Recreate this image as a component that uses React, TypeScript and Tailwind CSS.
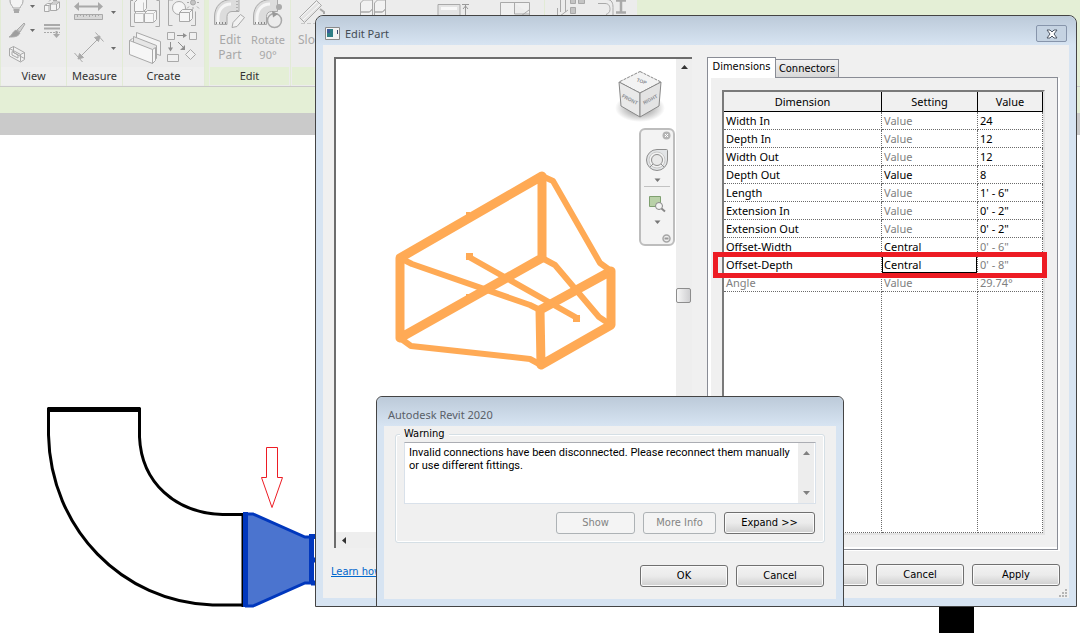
import type { ReactNode } from "react";

const UI_FONT = "font-['Noto_Sans','Open_Sans',sans-serif]";
const DIALOG_FONT = "font-['DejaVu_Sans_Condensed','DejaVu_Sans',sans-serif]";

const ROWS = [
  { name: "Width In", setting: "Value", value: "24" },
  { name: "Depth In", setting: "Value", value: "12" },
  { name: "Width Out", setting: "Value", value: "12" },
  { name: "Depth Out", setting: "Value", value: "8", editable: true },
  { name: "Length", setting: "Value", value: "1' - 6\"" },
  { name: "Extension In", setting: "Value", value: "0' - 2\"" },
  { name: "Extension Out", setting: "Value", value: "0' - 2\"" },
  { name: "Offset-Width", setting: "Central", value: "0' - 6\"", editable: true, computed: true },
  { name: "Offset-Depth", setting: "Central", value: "0' - 8\"", editable: true, computed: true, active: true },
  { name: "Angle", setting: "Value", value: "29.74°", computed: true, disabled: true },
];

const CELL = "h-[18px] border-b border-dotted border-[#6a6a6a] p-0 pl-0.5 text-left align-middle leading-4";

// Ribbon glyphs share one coordinate space; each svg shows its own slice of it.
function Glyph({ x, y = 0, w, h, children }: { x: number; y?: number; w: number; h: number; children: ReactNode }) {
  return (
    <svg
      width={w}
      height={h}
      viewBox={`${x} ${y} ${w} ${h}`}
      fill="none"
      stroke="#a9a9a9"
      className="block"
      aria-hidden="true"
    >
      {children}
    </svg>
  );
}

function Caret({ x, y }: { x: number; y: number }) {
  return <path d={`M${x - 3} ${y - 1}h5l-2.5 3z`} fill="#6b6b6b" stroke="none" />;
}

function RibbonPanel({ label, green, className = "", children }: { label: string; green?: boolean; className?: string; children: ReactNode }) {
  return (
    <section className={`flex h-[86px] shrink-0 flex-col border-r border-[#e2ebd6] ${className}`}>
      <div className="h-[67px] overflow-hidden">{children}</div>
      <h2
        className={`h-[18px] text-center text-[11px] leading-[18px] font-normal text-[#333] ${green ? "mx-px bg-[#e4efd6]" : "bg-[#efefef]"}`}
      >
        {label}
      </h2>
    </section>
  );
}

function Ribbon() {
  return (
    <header>
      <div className="flex h-[87px] overflow-hidden border-b border-[#c9c9c9] bg-[#e4efd6]">
        <div className="flex shrink-0 bg-[#ececec]">
          <RibbonPanel label="View" className="w-[67px] border-l border-l-[#e2ebd6]">
            <div className="flex pl-[7px]">
              <div>
                <button type="button" aria-label="Hide in view" className="block">
                  <Glyph x={8} w={34} h={22}>
                    <path d="M13 8c0-2-3-3-3-7 0-3 3-5 6.500-5s6.500 2 6.500 5c0 4-3 5-3 7z" fill="#f4f4f4" />
                    <path d="M13.500 10h6M14 12h5" strokeWidth="2" />
                    <Caret x={33} y={6} />
                  </Glyph>
                </button>
                <button type="button" aria-label="Override graphics" className="block">
                  <Glyph x={8} y={22} w={34} h={22}>
                    <path d="M24 23l1 1-5 8-3-2z" fill="#d0d0d0" />
                    <path d="M16 30l4 3c-2 4-6 4-11 4 3-1 3-5 7-7z" fill="#9e9e9e" />
                    <Caret x={33} y={30} />
                  </Glyph>
                </button>
                <button type="button" aria-label="Selection box" className="block">
                  <Glyph x={8} y={44} w={34} h={22}>
                    <path d="M9.500 48.500l4-2 11 6v7l-4 2.500-11-6zM9.500 48.500l11 6 4-2M20.500 54.500v7" fill="#f2f2f2" />
                    <path d="M12 51.500l6 3.500v3l-6-3zM13.500 46.500v6l11 6" />
                  </Glyph>
                </button>
              </div>
              <div>
                <button type="button" aria-label="Displace elements" className="block">
                  <Glyph x={42} w={22} h={22}>
                    <path d="M44.500 5.500l3-2h4v5.500l-2.500 2.500h-4.500zM44.500 5.500h4.500v6M49 5.500l2.500-2" fill="#f4f4f4" />
                    <path d="M50.500 4l3-2h6v6l-3 2.500h-6zM50.500 4h6v6.500M56.500 4l3-2M49 1.500l2-2M53 .5h4" fill="#f4f4f4" />
                  </Glyph>
                </button>
                <button type="button" aria-label="Linework" className="block">
                  <Glyph x={42} y={22} w={22} h={22}>
                    <path d="M44 25h16M44 28.500h16" strokeWidth="2" />
                    <path d="M44 32.500h16" strokeDasharray="2 1" />
                    <path d="M56.500 31v4" strokeWidth="2" />
                    <path d="M53 34h7l-3.500 4z" fill="#a9a9a9" stroke="none" />
                  </Glyph>
                </button>
              </div>
            </div>
          </RibbonPanel>

          <RibbonPanel label="Measure" className="w-14">
            <button type="button" aria-label="Measure between references" className="ml-1 block">
              <Glyph x={71} w={48} h={24}>
                <path d="M76 6.500h24" strokeWidth="2" />
                <path d="M79 2l-5 4.500 5 4.500zM98 2l5 4.500-5 4.500z" fill="#a9a9a9" stroke="none" />
                <path d="M74.500 14.500h28v5h-28z" fill="#d8d8d8" />
                <path d="M77.500 14v3M80.500 14v2M83.500 14v3M86.500 14v2M89.500 14v3M92.500 14v2M95.500 14v3M98.500 14v2" />
                <Caret x={114} y={12} />
              </Glyph>
            </button>
            <button type="button" aria-label="Aligned dimension" className="ml-1 block">
              <Glyph x={71} y={24} w={48} h={42}>
                <path d="M79 58l20-20M74.500 53l8 9M95.500 32.500l8 9" />
                <path d="M78 59l1.500-5.500 4 4zM100 36l-5.500 1.500 4 4z" fill="#a9a9a9" />
                <Caret x={114} y={48} />
              </Glyph>
            </button>
          </RibbonPanel>

          <RibbonPanel label="Create" className="w-[82px]">
            <div className="grid grid-cols-[40px_38px] pl-[3px]">
              <button type="button" aria-label="Create group">
                <Glyph x={126} w={40} h={28}>
                  <path d="M133 .5h-2.500v26h4M156.500 .5h3v26h-4" />
                  <path d="M134.500 2.500l3-3h9v9l-3 3h-9z" fill="#f6f6f6" />
                  <path d="M134.500 13.500l2-2h9v9l-2 2h-9z" fill="#f6f6f6" />
                  <path d="M144.500 13.500l3-3h9v9l-3 3h-9z" fill="#f6f6f6" />
                  <path d="M143.500 2.500v9M134.500 13.500h9v9M153.500 22.500v-9h-9M153.500 13.500l3-3" stroke="#c4c4c4" />
                </Glyph>
              </button>
              <button type="button" aria-label="Create similar">
                <Glyph x={166} w={38} h={28}>
                  <path d="M173 0h-4.500v25.500h4M191 25.500h4.500v-14" />
                  <circle cx="179" cy="8" r="6.500" fill="#f6f6f6" />
                  <path d="M179.500 12.500l3-3h10v9l-3 3h-10zM179.500 12.500h10v9M189.500 12.500l3-3" fill="#f6f6f6" />
                  <circle cx="193" cy="2.500" r="2.500" fill="#c4c4c4" />
                  <path d="M187 2.500h2M197 2.500h2M189 6.500l-2 2M197 6.500l2 2M193 7v2" />
                </Glyph>
              </button>
              <button type="button" aria-label="Create parts">
                <Glyph x={126} y={28} w={40} h={38}>
                  <path d="M136.500 32.500l24 9v14l-24-9z" fill="#f4f4f4" />
                  <path d="M133.500 36.500l23 9v13l-23-9z" fill="#e6e6e6" />
                  <path d="M129.500 40.500l23 9v14l-23-9zM152.500 49.500l3-2v13l-3 3M129.500 40.500l3-2" fill="#f6f6f6" />
                </Glyph>
              </button>
              <button type="button" aria-label="Create assembly">
                <Glyph x={166} y={28} w={38} h={38}>
                  <path d="M167.500 32.500h7v7h-7zM189.500 32.500h7v7h-7zM167.500 54.500h11v7h-11zM190.500 49.500l5 5-5 5-5-5z" fill="#f0f0f0" />
                  <path d="M177 35.500h7M170.500 42v6M178 42l5 5" stroke="#8f8f8f" />
                  <path d="M183 33l4 2.500-4 2.500zM168 47.500h5l-2.500 4zM180 50h5v-5z" fill="#8f8f8f" stroke="none" />
                </Glyph>
              </button>
            </div>
          </RibbonPanel>

          <div className="w-1 bg-[#e4efd6]" />

          <RibbonPanel label="Edit" green className="w-[82px]">
            <div className="flex items-start pl-0.5 text-[12px] leading-[15px] text-[#a8a8a8]">
              <button type="button" className="w-[38px]">
                <Glyph x={211} w={38} h={32}>
                  <path d="M214.500 24.500V17c0-11 7-17.500 17-17.500h7.500v12h-7c-3 0-5 2-5 5v8z" fill="#dcdcdc" />
                  <path d="M218 24.500V18c0-8 5-14 13-14" stroke="#f6f6f6" strokeWidth="3" />
                  <path d="M216.500 22v2M219.500 22v2M222.500 22v2M225.500 22v2M237 1v1M237 4v1M237 7v1M237 10v1" stroke="#888" />
                  <path d="M240.500 14.500l4 3-7.500 9-5 1 1-5z" fill="#f2f2f2" />
                </Glyph>
                <span className="block">Edit<br />Part</span>
              </button>
              <button type="button" className="w-[38px] text-center whitespace-nowrap">
                <Glyph x={249} w={38} h={32}>
                  <path d="M253.500 24.500V17c0-11 7-17.500 17-17.500h7v12h-6c-3 0-5 2-5 5v8z" fill="#dcdcdc" />
                  <path d="M257 24.500V18c0-8 5-14 13-14" stroke="#f6f6f6" strokeWidth="3" />
                  <path d="M255.500 22v2M258.500 22v2M261.500 22v2M264.500 22v2" stroke="#888" />
                  <circle cx="279" cy="7" r="3" fill="#aaa" stroke="none" />
                  <circle cx="274.500" cy="20.500" r="7" fill="#ececec" strokeWidth="1.500" />
                  <path d="M272 11l6 3-5 3.500z" fill="#999" stroke="none" />
                </Glyph>
                <span className="block text-[11px] leading-[15px]">Rotate<br />90°</span>
              </button>
            </div>
          </RibbonPanel>

          <RibbonPanel label="" green className="w-[254px]">
            <div className="flex items-start text-[12px] leading-[15px] text-[#a8a8a8]">
              <button type="button" className="w-[55px] text-left">
                <Glyph x={290} w={55} h={32}>
                  <path d="M298.500 17.500L315.500 .5l5 5-17 17z" fill="#e4e4e4" />
                  <path d="M300 17L316 2M302 20L319 4" stroke="#fafafa" />
                  <path d="M300 23.500h18" strokeDasharray="4 2" stroke="#c8c8c8" />
                  <path d="M319 9l4 3v2" strokeWidth="2" />
                </Glyph>
                <span className="block pl-[7px]">Slope</span>
              </button>
              <button type="button" aria-label="Justify">
                <Glyph x={345} w={65} h={32}>
                  <path d="M359.500 3l3-3h9v9l-3 3h-9zM373.500 3l3-3h8v9l-3 3h-8zM359.500 12h9l3-3v8h-12zM373.500 12h8l3-3v8h-11z" fill="#f2f2f2" />
                </Glyph>
              </button>
              <button type="button" aria-label="Elevation">
                <Glyph x={410} w={75} h={32}>
                  <path d="M437 4.500h22v12h-22z" fill="#e4e4e4" />
                  <path d="M440 8.500h16" stroke="#f8f8f8" strokeWidth="3" />
                  <path d="M464.500 5v12M461 4.500h7M462 9l2.500-3 2.500 3" stroke="#999" />
                </Glyph>
              </button>
              <button type="button" aria-label="Cap open ends">
                <Glyph x={485} w={58} h={32}>
                  <path d="M499.500 2.500h29v14h-29zM513.500 3v11h15M528 10l-8 6" fill="#f0f0f0" />
                </Glyph>
              </button>
            </div>
          </RibbonPanel>
          <RibbonPanel label="" green className="w-[92px] border-r-0">
            <div className="flex items-start">
              <button type="button" aria-label="Insulation">
                <Glyph x={544} w={47} h={32}>
                  <path d="M559.500 0v12M564.500 0v12M556.500 8v8M567 10l-8 6" />
                  <path d="M569.500-1.500h5v5h-5zM577.500-1.500h6v5h-6zM569.500 7.500h5v6h-5z" fill="#c4c4c4" />
                </Glyph>
              </button>
              <button type="button" aria-label="Lining">
                <Glyph x={591} w={44} h={32}>
                  <path d="M597 3.500h7c4 0 5 3 5 6s-2 4-4 5M597-.5h9c5 0 6 4 6 8v8" />
                  <path d="M615 .5h10M620 0v12M615 12.500h10" strokeWidth="2.500" />
                </Glyph>
              </button>
            </div>
          </RibbonPanel>
        </div>
      </div>
      <div className="h-[26px] bg-[#e4efd6]" />
      <div className="h-[22px] bg-[#cacaca]" />
    </header>
  );
}

function DuctPlan() {
  return (
    <svg
      viewBox="0 135 1080 498"
      preserveAspectRatio="xMinYMin slice"
      className="block h-[498px] w-full"
      role="img"
      aria-label="Duct elbow and selected transition"
    >
      <g fill="none" stroke="#000" strokeWidth="3">
        <path d="M48.500 408v27c2 94 74 167 164 170h31" />
        <path d="M139.500 408v29c2 46 36 76 83 77.500h21" />
        <path d="M47.500 409.500h93" strokeWidth="5" />
        <path d="M242.500 513v94" strokeWidth="2" />
      </g>
      <path d="M248 514h6l52 23h6v46h-6l-52 23h-6z" fill="#4b74cf" />
      <g fill="none" stroke="#0037bd" strokeWidth="3">
        <path d="M245.500 512v95" strokeWidth="5" />
        <path d="M245 514h8l52 23h8M245 606h8l52-23h8" />
        <path d="M311.500 534v50" strokeWidth="5" />
        <path d="M311 536.500h8M311 560h8M311 583h8" strokeWidth="5" />
      </g>
      <path d="M266.500 447.500h11v30h5l-10.500 30-10.500-30h5z" fill="#fff" stroke="#ed1c24" />
      <path d="M939 600h35v33h-35z" />
    </svg>
  );
}

function ViewCube() {
  return (
    <svg width="52" height="60" viewBox="614 66 52 60" className="absolute top-[7px] right-[10px]" role="img" aria-label="View cube">
      <defs>
        <radialGradient id="cubeShadow">
          <stop offset="0.500" stopColor="#bdbdbd" />
          <stop offset="1" stopColor="#fff" />
        </radialGradient>
      </defs>
      <ellipse cx="640" cy="108" rx="25" ry="14" fill="url(#cubeShadow)" />
      <g stroke="#888" strokeWidth="1" strokeLinejoin="round">
        <path d="M640 71.500l21 10.500-21 11-21-11z" fill="#f3f3f3" strokeDasharray="3 1" />
        <path d="M619 82l21 11v24l-19-11z" fill="#e9e9e9" />
        <path d="M661 82l-21 11v24l19-11z" fill="#e3e3e3" />
      </g>
      <g fontFamily="Liberation Sans, sans-serif" fontSize="5" fontWeight="700" fill="#8d9096" textAnchor="middle">
        <text transform="translate(641 83) rotate(20)">TOP</text>
        <text transform="translate(629 101) rotate(28)">FRONT</text>
        <text transform="translate(651 101) rotate(-28)">RIGHT</text>
      </g>
    </svg>
  );
}

function NavBar() {
  return (
    <div className="absolute top-[69px] right-px flex w-9 flex-col items-center rounded-md border-2 border-[#bdbdbd] bg-[#f3f3f3]">
      <button type="button" aria-label="Close navigation bar" className="self-end pr-px">
        <svg width="11" height="11" viewBox="0 0 11 11" className="block">
          <circle cx="5.500" cy="5.500" r="4" fill="#b4b4b4" />
          <path d="M4 4l3 3M7 4l-3 3" stroke="#fff" />
        </svg>
      </button>
      <button type="button" aria-label="Steering wheels" className="mt-[7px]">
        <svg width="24" height="24" viewBox="0 0 24 24" className="block" fill="#e2e4e6" stroke="#8e8e8e">
          <path d="M12 1.500h9.500a1 1 0 0 1 1 1V12A10.500 10.500 0 1 1 12 1.500z" />
          <circle cx="12" cy="12" r="8" fill="#f2f2f2" stroke="#c9c9c9" />
          <circle cx="12" cy="12" r="5.500" fill="#e9e9e9" />
          <path d="M8 16l-3 3M16 16l3 3" />
        </svg>
      </button>
      <svg width="7" height="5" viewBox="0 0 7 5" className="mt-1.5"><path d="M.5 .5h6l-3 3.500z" fill="#777" /></svg>
      <div className="mt-[3px] h-px w-[26px] bg-[#c2c2c2]" />
      <button type="button" aria-label="Zoom" className="mt-2">
        <svg width="18" height="18" viewBox="0 0 18 18" className="block">
          <path d="M1.500 1.500h11v10h-11z" fill="#b9d1a8" stroke="#7fa070" />
          <circle cx="11" cy="11" r="3.500" fill="#f3f3f3" stroke="#888" />
          <path d="M13.500 13.500l3.500 3" stroke="#888" strokeWidth="2" />
        </svg>
      </button>
      <svg width="7" height="5" viewBox="0 0 7 5" className="mt-[7px]"><path d="M.5 .5h6l-3 3.500z" fill="#777" /></svg>
      <button type="button" aria-label="Customize" className="mt-2 self-end pr-px">
        <svg width="11" height="11" viewBox="0 0 11 11" className="block">
          <circle cx="5.500" cy="5.500" r="3.500" fill="#eee" stroke="#a6a6a6" strokeWidth="1.500" />
          <path d="M3.500 5.500h4" stroke="#999" strokeWidth="2" />
        </svg>
      </button>
    </div>
  );
}

function Preview() {
  return (
    <div className="grid h-[491px] w-[358px] shrink-0 grid-cols-[1fr_16px] grid-rows-[1fr_16px] border-t-2 border-l-2 border-[#6d6d6d] bg-[#f0f0f0]">
      <div className="relative overflow-hidden bg-white">
        <svg width="340" height="473" viewBox="336 59 340 473" fill="none" stroke="#ffaa55" strokeLinejoin="round" strokeLinecap="round" className="block" role="img" aria-label="Transition wireframe">
          <g strokeWidth="9">
            <path d="M400 338v-80l142-82v82z" />
            <path d="M540 310l71-39v54l-70 40z" />
          </g>
          <g strokeWidth="6">
            <path d="M542 176l11 5 47 82 11 8M542 258l13 7 44 52 12 8M400 258l12 6 118 41 10 5M400 338l11 8 119 13 11 6" />
            <path d="M469 257l108 61" />
          </g>
          <path d="M466 253h7v7h-7zM573 315h7v7h-7zM466 212h4v5h-4zM466 294h4v5h-4zM541 335h4v7h-4z" fill="#ffaa55" stroke="none" />
        </svg>
        <ViewCube />
        <NavBar />
      </div>
      <div className="flex flex-col items-center bg-[#eeeeee]">
        <button type="button" aria-label="Scroll up" className="flex h-4 w-4 items-center justify-center">
          <svg width="7" height="4" viewBox="0 0 7 4"><path d="M3.500 0L7 4H0z" fill="#333" /></svg>
        </button>
        <div className="flex-1" />
        <div className="h-[15px] w-[15px] self-start rounded-xs border border-[#8d8d8d] bg-linear-to-r from-[#f6f6f6] to-[#cfcfd1]" />
        <div className="flex-1" />
        <div className="h-4" />
      </div>
      <div className="flex bg-[#eeeeee]">
        <button type="button" aria-label="Scroll left" className="flex h-4 w-4 items-center justify-center">
          <svg width="4" height="7" viewBox="0 0 4 7"><path d="M0 3.500L4 0v7z" fill="#333" /></svg>
        </button>
      </div>
      <div className="bg-[#f0f0f0]" />
    </div>
  );
}

function DimensionTable() {
  return (
    <div className="relative flex flex-1 flex-col border-t-2 border-r-2 border-b-2 border-l-2 border-[#7a7a7a] border-r-[#e3e3e3] border-b-[#e3e3e3] bg-white">
      <table className="h-full w-full flex-1 table-fixed border-separate border-spacing-0 text-[11px]">
        <colgroup>
          <col />
          <col className="w-24" />
          <col className="w-[65px]" />
        </colgroup>
        <thead>
          <tr className="bg-[#f0f0f0]">
            {["Dimension", "Setting", "Value"].map((title) => (
              <th key={title} className="h-5 border-r border-b border-black p-0 text-center leading-4 font-normal">
                {title}
              </th>
            ))}
          </tr>
        </thead>
        <tbody>
          {ROWS.map((row) => (
            <tr key={row.name}>
              <td className={`${CELL} border-r ${row.disabled ? "text-[#808080]" : ""}`}>{row.name}</td>
              <td
                className={`${CELL} ${row.editable ? "" : "text-[#808080]"} ${row.active ? "shadow-[inset_0_0_0_1px_#000]" : ""} border-r`}
              >
                {row.setting}
              </td>
              <td className={`${CELL} border-r ${row.computed ? "text-[#808080]" : ""}`}>{row.value}</td>
            </tr>
          ))}
          <tr>
            <td className="border-r border-b border-dotted border-[#6a6a6a]" />
            <td className="border-r border-b border-dotted border-[#6a6a6a]" />
            <td className="border-r border-b border-dotted border-[#6a6a6a]" />
          </tr>
        </tbody>
      </table>
      <div className="pointer-events-none absolute top-[160px] -right-1 -left-[11px] h-[26px] border-5 border-[#ed1c24]" />
    </div>
  );
}

function PushButton({ children, className = "w-[88px]", disabled }: { children: ReactNode; className?: string; disabled?: boolean }) {
  return (
    <button
      type="button"
      disabled={disabled}
      className={`h-[22px] shrink-0 rounded-[3px] border text-center text-[11px] leading-4 ${DIALOG_FONT} ${className} ${
        disabled
          ? "border-[#adb2b5] bg-[#f4f4f4] text-[#838383]"
          : "border-[#707070] bg-linear-to-b from-[#f2f2f2] from-0% via-[#ebebeb] via-50% to-[#cfcfcf] to-100% text-black shadow-[inset_0_0_0_1px_#fafafa]"
      }`}
    >
      {children}
    </button>
  );
}

function EditPartDialog() {
  return (
    <section
      role="dialog"
      aria-label="Edit Part"
      className="absolute top-[15px] right-[3px] left-[315px] flex flex-col rounded-t-lg border border-[#444] bg-[#d7e4f2] px-[7px] pb-2"
    >
      <div className="-mx-[7px] flex h-[29px] items-center rounded-t-lg bg-linear-to-b from-[#bccad9] to-[#d7e4f2] pt-1.5 pr-[9px] pl-[9px]">
        <svg width="15" height="13" viewBox="0 0 15 13" className="shrink-0">
          <path d="M.5 .5h14v12H.5z" fill="#f4f4f4" stroke="#8a8a8a" />
          <path d="M2 2h6v8H2z" fill="#2f7f86" />
          <path d="M2 2h3v4H2z" fill="#3c5d99" />
          <path d="M12 3h1v4h-1z" fill="#39466b" />
        </svg>
        <h1 className="ml-[5px] flex-1 text-[11px] leading-4 font-normal text-[#444c55]">Edit Part</h1>
        <button
          type="button"
          aria-label="Close"
          className="flex h-[17px] w-[31px] items-center justify-center rounded-xs border border-[#8795ab] bg-[#c5d3e2]"
        >
          <svg width="12" height="10" viewBox="0 0 12 10">
            <path d="M1 1h3l2 2 2-2h3L8 5l3 4H8L6 7 4 9H1l3-4z" fill="#fff" stroke="#4f5866" />
          </svg>
        </button>
      </div>
      <div className="flex flex-col bg-[#f0f0f0] pt-3 pr-[9px] pb-3 pl-[11px] text-black">
        <div className="flex h-[493px] items-start gap-[15px]">
          <Preview />
          <div className="mr-0.5 flex h-full flex-1 flex-col">
            <div role="tablist" className={`flex items-end text-[11px] leading-4 ${DIALOG_FONT}`}>
              <button
                type="button"
                role="tab"
                aria-selected="true"
                className="relative -mb-px h-[21px] w-[69px] border border-b-0 border-[#898c95] bg-white pb-0.5 text-center"
              >
                Dimensions
              </button>
              <button
                type="button"
                role="tab"
                aria-selected="false"
                className="h-[18px] w-[63px] border border-b-0 border-l-0 border-[#898c95] bg-linear-to-b from-[#f2f2f2] to-[#d8d8d8] text-center"
              >
                Connectors
              </button>
            </div>
            <div className="flex flex-1 flex-col border border-[#898c95] bg-white pb-0.5 pl-[3px] shadow-[2px_1px_0_#fff]">
              <div className="flex flex-1 flex-col bg-[#f0f0f0] pt-3 pr-3 pb-3 pl-[11px]">
                <DimensionTable />
              </div>
            </div>
          </div>
        </div>
        <div className="mt-[14px] flex items-start gap-2">
          <a href="#learn" className={`-ml-[3px] flex-1 text-[11px] leading-4 text-[#0066cc] underline ${DIALOG_FONT}`}>
            Learn how to edit parts
          </a>
          <PushButton>OK</PushButton>
          <PushButton>Cancel</PushButton>
          <PushButton>Apply</PushButton>
        </div>
      </div>
      <svg width="9" height="9" viewBox="0 0 9 9" fill="#b5b5b5" className="absolute right-2 bottom-2">
        <path d="M6 0h2v2H6zM3 3h2v2H3zM6 3h2v2H6zM0 6h2v2H0zM3 6h2v2H3zM6 6h2v2H6z" />
      </svg>
    </section>
  );
}

function WarningDialog() {
  return (
    <section
      role="alertdialog"
      aria-label="Autodesk Revit 2020"
      className="absolute top-[396px] left-[376px] w-[468px] rounded-t-md border border-[#444] bg-[#d7e4f2] px-[7px] pb-[7px]"
    >
      <h1 className="-mx-[7px] h-[29px] rounded-t-md bg-linear-to-b from-[#bccad9] to-[#d7e4f2] pt-2.5 pl-[11px] text-[11px] leading-4 font-normal text-[#5a6068]">
        Autodesk Revit 2020
      </h1>
      <div className={`bg-[#f0f0f0] px-[11px] pb-3 text-[11px] text-black ${DIALOG_FONT}`}>
        <fieldset className="rounded-[3px] border border-[#d5dfe5] px-2 pb-2 shadow-[inset_0_0_0_1px_#fff]">
          <legend className="-ml-1 bg-[#f0f0f0] px-1 leading-4">
            <label htmlFor="warning-message">Warning</label>
          </legend>
          <div className="flex h-[62px] border border-[#d9e1ea] border-t-[#abadb3] bg-white pr-px">
            <textarea
              id="warning-message"
              readOnly
              value="Invalid connections have been disconnected. Please reconnect them manually or use different fittings."
              className="flex-1 resize-none overflow-hidden pt-[3px] pl-1 font-['Roboto',sans-serif] leading-[13px] outline-none"
            />
            <div className="flex w-4 flex-col items-center justify-between bg-[#ededed] py-2">
              <svg width="7" height="4" viewBox="0 0 7 4"><path d="M3.500 0L7 4H0z" fill="#808080" /></svg>
              <svg width="7" height="4" viewBox="0 0 7 4"><path d="M3.500 4L7 0H0z" fill="#808080" /></svg>
            </div>
          </div>
          <div className="mt-2 flex justify-end gap-2 pr-px">
            <PushButton disabled className="w-[79px]">Show</PushButton>
            <PushButton disabled className="w-[73px]">More Info</PushButton>
            <PushButton className="w-[91px]">Expand &gt;&gt;</PushButton>
          </div>
        </fieldset>
        <div className="mt-[22px] flex justify-end gap-2 pr-px">
          <PushButton>OK</PushButton>
          <PushButton>Cancel</PushButton>
        </div>
      </div>
    </section>
  );
}

export default function App() {
  return (
    <main className={`relative min-h-screen overflow-hidden bg-white ${UI_FONT}`}>
      <Ribbon />
      <DuctPlan />
      <EditPartDialog />
      <WarningDialog />
    </main>
  );
}
